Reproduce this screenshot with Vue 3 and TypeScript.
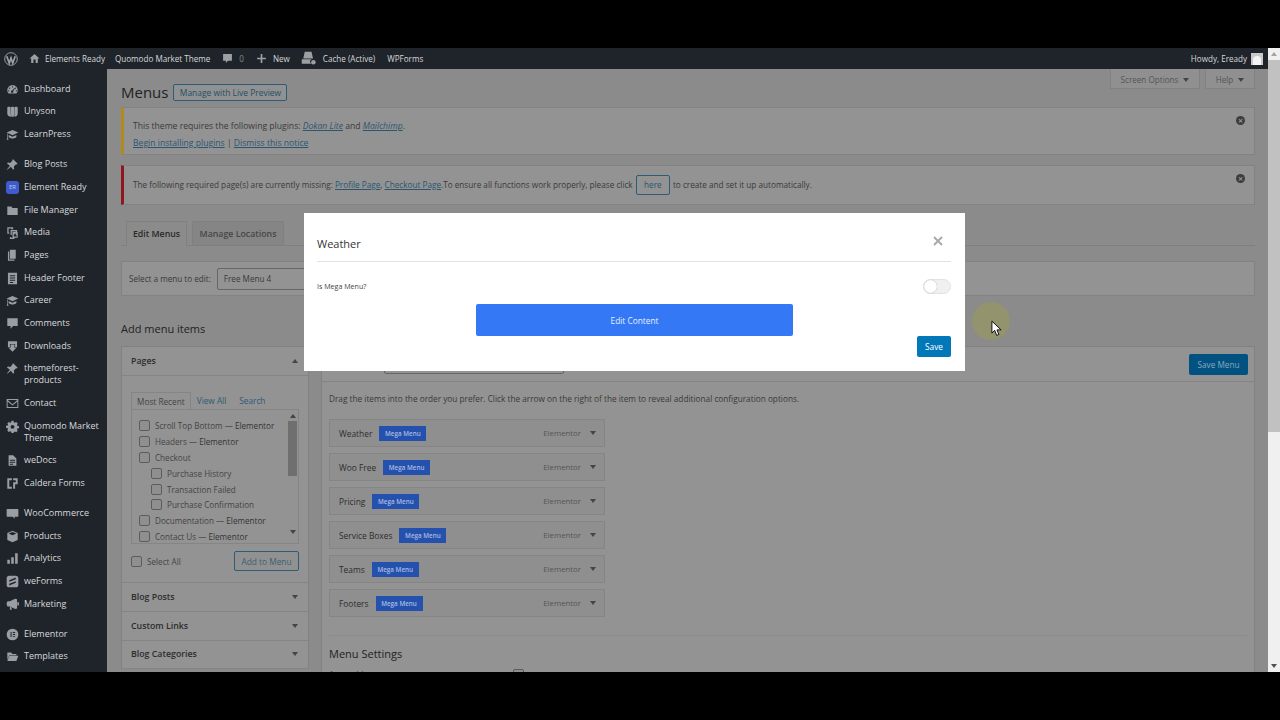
<script setup lang="ts">
type NavItem = { label: string; icon: string; sep?: boolean }

const nav: NavItem[] = [
  { label: 'Dashboard', icon: 'gauge' },
  { label: 'Unyson', icon: 'unyson' },
  { label: 'LearnPress', icon: 'cap' },
  { label: 'Blog Posts', icon: 'pin', sep: true },
  { label: 'Element Ready', icon: 'er' },
  { label: 'File Manager', icon: 'folder' },
  { label: 'Media', icon: 'media' },
  { label: 'Pages', icon: 'pages' },
  { label: 'Header Footer', icon: 'doc' },
  { label: 'Career', icon: 'cap' },
  { label: 'Comments', icon: 'comment' },
  { label: 'Downloads', icon: 'download' },
  { label: 'themeforest-products', icon: 'pin' },
  { label: 'Contact', icon: 'mail' },
  { label: 'Quomodo Market Theme', icon: 'gear' },
  { label: 'weDocs', icon: 'docs' },
  { label: 'Caldera Forms', icon: 'caldera' },
  { label: 'WooCommerce', icon: 'woo', sep: true },
  { label: 'Products', icon: 'box' },
  { label: 'Analytics', icon: 'bars' },
  { label: 'weForms', icon: 'weforms' },
  { label: 'Marketing', icon: 'mega' },
  { label: 'Elementor', icon: 'elementor', sep: true },
  { label: 'Templates', icon: 'open' }
]

const icons: Record<string, string> = {
  gauge: 'M10 3a8 8 0 0 0-8 8c0 2 .7 3.800 2 5h12c1.300-1.200 2-3 2-5a8 8 0 0 0-8-8zm0 2a1 1 0 1 1 0 2 1 1 0 0 1 0-2zM5.500 7a1 1 0 1 1 0 2 1 1 0 0 1 0-2zm9 0a1 1 0 1 1 0 2 1 1 0 0 1 0-2zM4 11a1 1 0 1 1 0 2 1 1 0 0 1 0-2zm12 0a1 1 0 1 1 0 2 1 1 0 0 1 0-2zm-3-3.500 1 .7-3 4.300a1.800 1.800 0 1 1-1.300-.9z',
  unyson: 'M2 4c0-1 1-1.500 2.500-1.500S7 3 7 4v9c0 1 .5 1.500 1 1.500V18c-3 0-6-1.500-6-5zm5.500 0c0-1 1-1.500 2.500-1.500s2.500.5 2.500 1.500v12c0 1-1 2-2.500 2s-2.500-1-2.500-2zM13 4c0-1 1-1.500 2.500-1.500S18 3 18 4v9c0 3-1.500 5-5 5v-3.500c.5 0 0-.5 0-1.500z',
  cap: 'M1 7l9-4 9 4-9 4zm3 3.800 6 2.700 6-2.700V14c-1.500 1.500-3.500 2.300-6 2.300S5.500 15.500 4 14zM2 8.500h1V15l1 3H1l1-3z',
  pin: 'M11 2l7 7-1.500 1-1-.5-3.500 3.500.5 3.500L11 18l-3.500-4.500L2 18l-.5-.5L6 12 1.500 8.500 3 7l3.500.5L10 4l-.5-1z',
  folder: 'M2 4h6l2 2h8v11H2z',
  media: 'M2 2h9v3H8V4H4v6h1v2H2zm5 4h10v3h-2V8h-6v6H7zm-1 8v3h2v1h5v2H6zm4-5h8v9h-8zm2 5 2-3 3 5h-5z',
  pages: 'M6 1h9v14H6zM3 4h2v12h8v2H3z',
  doc: 'M3 1h14v18H3zm3 4v1.500h8V5zm0 3.500V10h8V8.500zm0 3.500v1.500h8V12zm0 3.500V17h5v-1.500z',
  comment: 'M2 2h16v12h-7l-4 4v-4H2z',
  download: 'M3 2h14v9h-3V6H6v5H3zm4 5h6v5h3l-6 6-6-6h3z',
  mail: 'M1 3h18v14H1zm2 2 7 6 7-6v-.500H3zm-.5 2v8.500h15V7L10 13z',
  gear: 'M8.500 1h3l.5 2.500 1.500.7L15.700 3l2.300 2.300-1.200 2.200.7 1.500 2.500.5v3l-2.500.5-.7 1.500 1.200 2.200-2.300 2.300-2.200-1.200-1.500.7-.5 2.500h-3L8 18l-1.500-.7L4.300 18.500 2 16.200l1.200-2.200-.7-1.500L0 12V9l2.500-.5.7-1.500L2 5.300 4.300 3l2.200 1.200L8 3.500zM10 7.500a3 3 0 1 0 0 6 3 3 0 0 0 0-6z',
  docs: 'M4 2h7l5 5v11H4zm2 7v1.500h8V9zm0 3v1.500h8V12zm0 3v1.500h5V15z',
  caldera: 'M2 2h7v3H5v10h4v3H2zm9 0h7v9h-4v7h-3V8h4V5h-4z',
  woo: 'M2 3h16a1 1 0 0 1 1 1v10a1 1 0 0 1-1 1h-5l1 3-4-3H2a1 1 0 0 1-1-1V4a1 1 0 0 1 1-1z',
  box: 'M10 1l8 3.500v11L10 19l-8-3.500v-11zM4 5.500 10 8l6-2.500L10 3z',
  bars: 'M2 12h4v6H2zm6-4h4v10H8zm6-6h4v16h-4z',
  weforms: 'M5 1h10a4 4 0 0 1 4 4v10a4 4 0 0 1-4 4H5a4 4 0 0 1-4-4V5a4 4 0 0 1 4-4zm10 3-10 4v2.500l10-4zm0 5.500-10 4V16l10-4z',
  mega: 'M14 1l3 1v14l-3 1-8-4H3c-1 0-2-1.500-2-4s1-4 2-4h3zM6 13.500l2 .9 1 3.600H6zM17.500 6a3 3 0 0 1 0 6z',
  elementor: 'M10 1a9 9 0 1 0 0 18 9 9 0 0 0 0-18zM7 6h1.500v8H7zm3.500 0H14v1.500h-3.500zm0 3.200H14v1.500h-3.500zm0 3.300H14V14h-3.500z',
  open: 'M2 4h6l2 2h6v2H5l-3 7zm3 5h14l-3 8H2z'
}

const pageItems = [
  { label: 'Scroll Top Bottom', tag: 'Elementor' },
  { label: 'Headers', tag: 'Elementor' },
  { label: 'Checkout' },
  { label: 'Purchase History', child: true },
  { label: 'Transaction Failed', child: true },
  { label: 'Purchase Confirmation', child: true },
  { label: 'Documentation', tag: 'Elementor' },
  { label: 'Contact Us', tag: 'Elementor' }
]

const menuItems = ['Weather', 'Woo Free', 'Pricing', 'Service Boxes', 'Teams', 'Footers']
const closedBoxes = ['Blog Posts', 'Custom Links', 'Blog Categories']
</script>

<template>
  <div class="screen">
    <div class="frame">
      <div class="wp">
        <header class="adminbar">
          <svg class="wp-logo" viewBox="0 0 20 20">
            <circle cx="10" cy="10" r="9" fill="none" stroke="#9da0a3" stroke-width="1.400" />
            <path d="M4 6l3.500 10L10 8.500 12.500 16 16 6" fill="none" stroke="#9da0a3" stroke-width="2.400" />
          </svg>
          <svg class="bar-icon home" viewBox="0 0 20 20"><path fill="#9da0a3" d="M10 2l9 8h-3v8h-4v-6H8v6H4v-8H1z" /></svg>
          <span class="bar-link site">Elements Ready</span>
          <span class="bar-link theme">Quomodo Market Theme</span>
          <svg class="bar-icon comment" viewBox="0 0 20 20"><path fill="#9da0a3" d="M2 2h16v12h-7l-4 4v-4H2z" /></svg>
          <span class="bar-count">0</span>
          <svg class="bar-icon plus" viewBox="0 0 20 20"><path fill="#9da0a3" d="M8.500 2h3v6.500H18v3h-6.500V18h-3v-6.500H2v-3h6.500z" /></svg>
          <span class="bar-link new">New</span>
          <svg class="bar-icon cache" viewBox="0 0 20 20"><path fill="#9da0a3" d="M5 1h9l2 9H3zM1 11h14a3 3 0 0 0 0 6H1z" /><circle cx="16.500" cy="15" r="3" fill="#9da0a3" /></svg>
          <span class="bar-link cache-text">Cache (Active)</span>
          <span class="bar-link forms">WPForms</span>
          <span class="howdy">Howdy, Eready</span>
          <span class="avatar"><i></i></span>
        </header>

        <div class="body">
          <nav class="sidebar">
            <div v-for="item in nav" :key="item.label" class="nav-row" :class="{ sep: item.sep }">
              <span v-if="item.icon === 'er'" class="er-icon">ER</span>
              <svg v-else class="nav-icon" viewBox="0 0 20 20"><path fill="#9a9da1" fill-rule="evenodd" :d="icons[item.icon]" /></svg>
              <span class="nav-label">{{ item.label }}</span>
            </div>
          </nav>

          <main class="content">
            <div class="meta">
              <span class="meta-tab screen-tab">Screen Options <b></b></span>
              <span class="meta-tab help-tab">Help <b></b></span>
            </div>

            <div class="title-row">
              <h1>Menus</h1>
              <span class="outline-btn">Manage with Live Preview</span>
            </div>

            <section class="notice warn">
              <p>This theme requires the following plugins: <a class="em">Dokan Lite</a> and <a class="em">Mailchimp</a>.</p>
              <p class="second"><a>Begin installing plugins</a> | <a>Dismiss this notice</a></p>
              <span class="dismiss">×</span>
            </section>

            <section class="notice error">
              <p>The following required page(s) are currently missing: <a>Profile Page</a>, <a>Checkout Page</a>.To ensure all functions work properly, please click <span class="here">here</span> to create and set it up automatically.</p>
              <span class="dismiss">×</span>
            </section>

            <div class="tabs">
              <span class="tab active">Edit Menus</span>
              <span class="tab locations">Manage Locations</span>
            </div>

            <div class="manage">
              <span>Select a menu to edit:</span>
              <span class="select">Free Menu 4</span>
            </div>

            <div class="columns">
              <aside class="left">
                <h2>Add menu items</h2>
                <div class="accordion">
                  <div class="acc-head">Pages <b class="up"></b></div>
                  <div class="acc-body">
                    <div class="list-tabs">
                      <span class="list-tab">Most Recent</span>
                      <a>View All</a>
                      <a>Search</a>
                    </div>
                    <div class="list">
                      <ul>
                        <li v-for="p in pageItems" :key="p.label" :class="{ child: p.child }">
                          <i class="check"></i>
                          <span>{{ p.label }}<template v-if="p.tag"> — <em>{{ p.tag }}</em></template></span>
                        </li>
                      </ul>
                      <div class="list-scroll"><b class="up"></b><i></i><b class="down"></b></div>
                    </div>
                    <div class="list-foot">
                      <i class="check"></i>
                      <span>Select All</span>
                      <span class="outline-btn add">Add to Menu</span>
                    </div>
                  </div>
                  <div v-for="box in closedBoxes" :key="box" class="acc-head closed">{{ box }} <b class="down"></b></div>
                </div>
              </aside>

              <section class="editor">
                <div class="editor-head">
                  <span class="name-input"></span>
                  <span class="save-menu">Save Menu</span>
                </div>
                <div class="editor-body">
                  <p class="hint">Drag the items into the order you prefer. Click the arrow on the right of the item to reveal additional configuration options.</p>
                  <div v-for="m in menuItems" :key="m" class="menu-item">
                    <span class="m-name">{{ m }}</span>
                    <span class="badge">Mega Menu</span>
                    <span class="m-type">Elementor</span>
                    <b class="down"></b>
                  </div>
                  <div class="settings">
                    <h3>Menu Settings</h3>
                    <div class="settings-row">
                      <span>Auto add pages</span>
                      <i class="check"></i>
                    </div>
                  </div>
                </div>
              </section>
            </div>
          </main>
        </div>
      </div>

      <div class="scrollbar"><b class="up"></b><i></i><b class="down"></b></div>

      <div class="modal">
        <div class="modal-head">
          <span class="modal-title">Weather</span>
          <svg class="modal-close" viewBox="0 0 10 10"><path d="M1 1l8 8M9 1l-8 8" stroke="#a8a8a8" stroke-width="1.900" /></svg>
        </div>
        <div class="mega-row">
          <span class="mega-label">Is Mega Menu?</span>
          <span class="toggle"><i></i></span>
        </div>
        <button class="edit-btn">Edit Content</button>
        <div class="modal-foot"><button class="save-btn">Save</button></div>
      </div>

      <span class="cursor-spot"></span>
      <svg class="cursor" viewBox="0 0 12 18">
        <path d="M1 1v13l3-3 2.200 5.500 2.400-1L6.500 10.500H11z" fill="#fff" stroke="#000" stroke-width="1" />
      </svg>
    </div>
  </div>
</template>

<style scoped>
.screen {
  height: 720px;
  padding: 48px 0;
  box-sizing: border-box;
  background: #000;
  font-family: "Open Sans", "Liberation Sans", sans-serif;
  font-size: 8.15px;
  color: #333;
}

.frame {
  position: relative;
  display: flex;
  height: 624px;
  overflow: hidden;
  background: #8b8b8b;
}

.wp {
  flex: 1;
  min-width: 0;
  display: flex;
  flex-direction: column;
}

.adminbar {
  display: flex;
  align-items: center;
  flex: none;
  height: 21px;
  background: #1f242b;
  color: #d6d7d8;
  font-size: 8.1px;
}

.wp-logo {
  width: 14px;
  height: 14px;
  margin-left: 4px;
}

.bar-icon {
  width: 11px;
  height: 11px;
  flex: none;
}

.home { margin-left: 11px; }
.site { margin-left: 5px; }
.theme { margin-left: 10px; }
.comment { margin-left: 12px; }
.bar-count { margin-left: 6px; color: #85888b; }
.plus { margin-left: 12px; }
.new { margin-left: 6px; }
.cache { margin-left: 11px; width: 15px; height: 15px; }
.cache-text { margin-left: 7px; }
.forms { margin-left: 12px; }

.howdy {
  margin-left: auto;
}

.avatar {
  display: flex;
  align-items: flex-end;
  justify-content: center;
  width: 12px;
  height: 12px;
  margin: 0 5px 0 4px;
  overflow: hidden;
  background: #c9c9c9;
}

.avatar i {
  width: 8px;
  height: 9px;
  border-radius: 4px 4px 0 0;
  background: #f4f4f4;
}

.body {
  flex: 1;
  display: flex;
  min-height: 0;
}

.sidebar {
  flex: none;
  width: 107px;
  padding-top: 8.5px;
  box-sizing: border-box;
  background: #1f242b;
  color: #d8d9da;
  font-size: 9px;
}

.nav-row {
  display: flex;
  align-items: flex-start;
  padding: 5.33px 0;
  line-height: 12px;
}

.nav-row.sep {
  margin-top: 7.5px;
}

.nav-icon {
  flex: none;
  width: 13px;
  height: 13px;
  margin: 0 5px -1px 6px;
}

.er-icon {
  flex: none;
  width: 13px;
  height: 13px;
  margin: 0 5px -1px 6px;
  border-radius: 3px;
  background: #3e5ccf;
  color: #b9c6ee;
  font-size: 6px;
  line-height: 13px;
  text-align: center;
}

.nav-label {
  width: 78px;
}

.content {
  flex: 1;
  min-width: 0;
  padding: 0 13px 0 14px;
  color: #3a3a3a;
}

.meta {
  float: right;
  display: flex;
  gap: 5px;
}

.meta-tab {
  display: flex;
  align-items: center;
  justify-content: center;
  gap: 5px;
  height: 20px;
  padding-top: 2px;
  box-sizing: border-box;
  border: 1px solid #828282;
  border-top: 0;
  background: #909090;
  color: #555;
}

.screen-tab { width: 90px; }
.help-tab { width: 50px; }

.meta-tab b {
  border-top: 4px solid #444;
  border-left: 3px solid transparent;
  border-right: 3px solid transparent;
}

.title-row {
  display: flex;
  align-items: center;
  gap: 5px;
  height: 17px;
  padding-top: 15px;
}

h1 {
  margin: -2px 0 0;
  font-size: 15px;
  font-weight: 400;
  color: #222;
}

.outline-btn {
  display: flex;
  align-items: center;
  justify-content: center;
  width: 114px;
  height: 17px;
  box-sizing: border-box;
  border: 1px solid #2c5c78;
  border-radius: 2px;
  background: #919191;
  color: #245069;
  font-size: 8.45px;
}

.notice {
  position: relative;
  margin-top: 6px;
  height: 48px;
  box-sizing: border-box;
  padding: 12px 9px 0;
  border: 1px solid #828282;
  border-left: 3px solid #b08a1e;
  background: #939393;
  font-size: 8.6px;
}

.notice p {
  margin: 0;
  line-height: 12px;
}

.notice .second {
  margin-top: 5px;
}

.notice a {
  color: #2a5670;
  text-decoration: underline;
}

.notice a.em {
  font-style: italic;
}

.notice.error {
  display: flex;
  align-items: center;
  margin-top: 10px;
  height: 40px;
  padding-top: 0;
  border-left-color: #8f1820;
  font-size: 8.2px;
}

.here {
  display: inline-block;
  width: 32px;
  margin: 0 1px;
  border: 1px solid #2c5c78;
  border-radius: 2px;
  color: #2a5670;
  line-height: 18px;
  text-align: center;
}

.dismiss {
  position: absolute;
  top: 8px;
  right: 9px;
  width: 9px;
  height: 9px;
  border-radius: 50%;
  background: #3c3c3c;
  color: #939393;
  font-size: 9px;
  font-weight: 700;
  line-height: 9px;
  text-align: center;
}

.tabs {
  display: flex;
  gap: 5px;
  margin-top: 16px;
  padding-left: 5px;
  height: 24px;
  border-bottom: 1px solid #7f7f7f;
}

.tab {
  display: flex;
  align-items: center;
  justify-content: center;
  width: 61px;
  height: 24px;
  box-sizing: border-box;
  border: 1px solid #808080;
  border-bottom: 0;
  background: #858585;
  color: #474747;
  font-size: 8.8px;
  font-weight: 600;
}

.tab.locations {
  width: 92px;
}

.tab.active {
  height: 25px;
  background: #8b8b8b;
  color: #2a2a2a;
}

.manage {
  display: flex;
  align-items: center;
  gap: 6px;
  margin-top: 15px;
  height: 35px;
  box-sizing: border-box;
  padding-left: 7px;
  border: 1px solid #828282;
  background: #939393;
}

.select {
  width: 110px;
  height: 20px;
  padding-left: 6px;
  border: 1px solid #666;
  border-radius: 2px;
  line-height: 20px;
}

.columns {
  display: flex;
  gap: 12px;
}

.left {
  flex: none;
  width: 188px;
}

h2 {
  margin: 26px 0 10px;
  height: 14px;
  font-size: 11px;
  font-weight: 500;
  line-height: 14px;
  color: #222;
}

.accordion {
  border: 1px solid #828282;
  border-bottom: 0;
  background: #939393;
}

.acc-head {
  display: flex;
  align-items: center;
  justify-content: space-between;
  height: 28px;
  padding: 0 10px 0 9px;
  border-bottom: 1px solid #858585;
  color: #2d2d2d;
  font-size: 8.8px;
  font-weight: 600;
}

.up {
  border-bottom: 4px solid #444;
  border-left: 3px solid transparent;
  border-right: 3px solid transparent;
}

.down {
  border-top: 4px solid #444;
  border-left: 3px solid transparent;
  border-right: 3px solid transparent;
}

.acc-body {
  height: 190px;
  padding: 16px 9px 0;
  border-bottom: 1px solid #858585;
}

.list-tabs {
  display: flex;
  align-items: center;
  gap: 13px;
  height: 17px;
  color: #2c5a75;
  font-size: 8.25px;
}

.list-tab {
  display: flex;
  align-items: center;
  height: 17px;
  padding: 0 5px;
  margin-right: -7px;
  border: 1px solid #858585;
  border-bottom: 0;
  color: #444;
}

.list {
  display: flex;
  height: 135px;
  border: 1px solid #858585;
  box-sizing: border-box;
}

.list ul {
  flex: 1;
  margin: 0;
  padding: 8px 0 0 7px;
  list-style: none;
}

.list li {
  display: flex;
  align-items: center;
  gap: 5px;
  height: 15.8px;
  color: #444;
  white-space: nowrap;
}

.list li.child {
  padding-left: 12px;
}

.list em {
  font-style: normal;
  color: #333;
}

.check {
  flex: none;
  width: 9px;
  height: 9px;
  border: 1px solid #5c5c5c;
  border-radius: 2px;
  background: #8f8f8f;
}

.list-scroll {
  display: flex;
  flex-direction: column;
  align-items: center;
  flex: none;
  width: 9px;
  margin: 0 1px;
  padding-top: 4px;
}

.list-scroll i {
  width: 9px;
  height: 55px;
  margin: 3px 0 54px;
  background: #6f6f6f;
}

.list-foot {
  display: flex;
  align-items: center;
  gap: 5px;
  margin-top: 7px;
  color: #444;
}

.outline-btn.add {
  width: 65px;
  height: 20px;
  margin-left: auto;
  color: #3a5f74;
  font-size: 8.3px;
}

.acc-head.closed {
  height: 27.75px;
}

.editor {
  flex: 1;
  min-width: 0;
  margin-top: 50px;
  border: 1px solid #828282;
  border-bottom: 0;
  background: #939393;
}

.editor-head {
  display: flex;
  align-items: center;
  height: 34px;
  padding: 0 6px 0 62px;
  border-bottom: 1px solid #858585;
}

.name-input {
  width: 180px;
  height: 20px;
  box-sizing: border-box;
  border: 1px solid #666;
  border-radius: 2px;
}

.save-menu {
  margin-left: auto;
  width: 59px;
  height: 21px;
  border-radius: 2px;
  background: #015281;
  color: #8aa9bd;
  font-size: 8.2px;
  line-height: 21px;
  text-align: center;
}

.editor-body {
  padding: 10px 7px 0;
}

.hint {
  margin: 0 0 14px;
  font-size: 8.25px;
  line-height: 13px;
}

.menu-item {
  display: flex;
  align-items: center;
  width: 276px;
  height: 28px;
  box-sizing: border-box;
  margin-bottom: 6px;
  padding: 0 8px 0 9px;
  border: 1px solid #858585;
  background: #8f8f8f;
  color: #2d2d2d;
  font-size: 8.4px;
}

.badge {
  margin-left: 7px;
  width: 47px;
  height: 15px;
  background: #2450ae;
  color: #a9bbdf;
  font-size: 6.3px;
  font-weight: 600;
  line-height: 15px;
  text-align: center;
}

.m-type {
  margin-left: auto;
  margin-right: 9px;
  color: #555;
  font-size: 7.8px;
}

.settings {
  margin-top: 18px;
  padding-top: 11px;
  border-top: 1px solid #8a8a8a;
}

h3 {
  margin: 0;
  font-size: 11px;
  font-weight: 500;
  line-height: 14px;
  color: #222;
}

.settings-row {
  display: flex;
  align-items: center;
  margin-top: 8px;
}

.settings-row span {
  width: 184px;
}

.scrollbar {
  display: flex;
  flex-direction: column;
  align-items: center;
  flex: none;
  width: 12px;
  padding-top: 4px;
  box-sizing: border-box;
  background: #f0f0f0;
}

.scrollbar i {
  width: 100%;
  height: 372px;
  margin-top: 4px;
  background: #c1c1c1;
}

.scrollbar .up {
  border-bottom-color: #a3a3a3;
}

.scrollbar .down {
  margin-top: auto;
  margin-bottom: 4px;
  border-top-color: #505050;
}

.modal {
  position: absolute;
  left: 304px;
  top: 165px;
  width: 661px;
  height: 158px;
  box-sizing: border-box;
  padding: 0 14px 0 13px;
  background: #fff;
}

.modal-head {
  display: flex;
  align-items: center;
  justify-content: space-between;
  height: 49px;
  padding: 8px 8px 0 0;
  box-sizing: border-box;
  border-bottom: 1px solid #e2e2e2;
}

.modal-title {
  margin-top: 5px;
  font-size: 11px;
  color: #333;
}

.modal-close {
  width: 10px;
  height: 10px;
}

.mega-row {
  display: flex;
  align-items: center;
  justify-content: space-between;
  margin-top: 17px;
  height: 15px;
  font-size: 7.1px;
  color: #444;
}

.mega-label {
  margin-bottom: 2px;
}

.toggle {
  width: 28px;
  height: 15px;
  box-sizing: border-box;
  border: 1px solid #e2e2e2;
  border-radius: 8px;
  background: #f0f0f0;
}

.toggle i {
  display: block;
  width: 13px;
  height: 13px;
  border-radius: 50%;
  background: #fff;
  box-shadow: 0 0 1px #999;
}

.edit-btn {
  display: block;
  width: 317px;
  height: 32px;
  margin: 10px 0 0 159px;
  border: 0;
  border-radius: 2px;
  background: #3478f6;
  color: #e8f0ff;
  font: inherit;
  font-size: 8.3px;
}

.modal-foot {
  display: flex;
  justify-content: flex-end;
}

.save-btn {
  width: 34px;
  height: 21px;
  border: 0;
  border-radius: 2px;
  background: #0278b9;
  color: #fff;
  font: inherit;
  font-size: 8.3px;
}

.cursor-spot {
  position: absolute;
  left: 972px;
  top: 254px;
  width: 38px;
  height: 38px;
  border-radius: 50%;
  background: #93936e;
}

.cursor {
  position: absolute;
  left: 991px;
  top: 272px;
  width: 11px;
  height: 17px;
}
</style>
